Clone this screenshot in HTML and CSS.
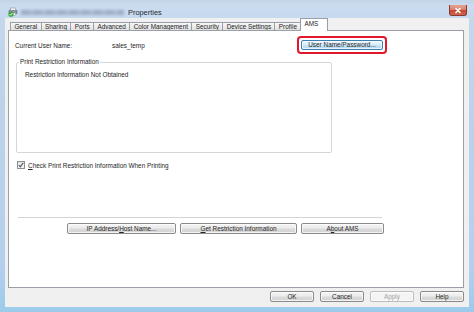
FILE: index.html
```html
<!DOCTYPE html>
<html>
<head>
<meta charset="utf-8">
<link rel="stylesheet" href="styles.css">
</head>
<body>
<div class="window">
  <div class="titlebar">
    <svg class="app-icon" width="10" height="10" viewBox="0 0 10 10">
      <rect x="1" y="3" width="8" height="4" rx="1" fill="#8d9aa6" stroke="#5b6670" stroke-width="0.6"/>
      <rect x="2.5" y="1" width="5" height="2.2" fill="#f4f6f8" stroke="#7a8590" stroke-width="0.5"/>
      <rect x="2.5" y="6" width="5" height="2.5" fill="#ffffff" stroke="#7a8590" stroke-width="0.5"/>
      <circle cx="3" cy="7.2" r="2.6" fill="#3aa83a"/>
      <path d="M1.7 7.2 L2.7 8.2 L4.4 6.1" stroke="#fff" stroke-width="0.9" fill="none"/>
    </svg>
    <div class="blurred-name"></div>
    <div class="title">Properties</div>
    <div class="close-btn">
      <svg width="8" height="7" viewBox="0 0 8 7"><path d="M1.5 1 L6.5 6 M6.5 1 L1.5 6" stroke="#fff" stroke-width="1.6"/></svg>
    </div>
  </div>
  <div class="client">
    <div class="tabs">
      <div class="tab">General</div>
      <div class="tab">Sharing</div>
      <div class="tab">Ports</div>
      <div class="tab">Advanced</div>
      <div class="tab">Color Management</div>
      <div class="tab">Security</div>
      <div class="tab">Device Settings</div>
      <div class="tab">Profile</div>
      <div class="tab tab-active">AMS</div>
    </div>
    <div class="panel">
      <div class="content">
        <div class="user-row">
          <span class="user-label">Current User Name:</span>
          <span class="user-value">sales_temp</span>
          <div class="highlight">
            <button class="btn btn-hot btn-user">User Name/Password...</button>
          </div>
        </div>
        <fieldset class="group">
          <legend>Print Restriction Information</legend>
          <div class="group-body">Restriction Information Not Obtained</div>
        </fieldset>
        <label class="check-row">
          <span class="checkbox">
            <svg width="6" height="6" viewBox="0 0 6 6"><path d="M0.8 3.2 L2.3 4.8 L5.2 0.9" stroke="#4a5a6a" stroke-width="1.1" fill="none"/></svg>
          </span>
          <span><u>C</u>heck Print Restriction Information When Printing</span>
        </label>
        <div class="separator"></div>
        <div class="action-row">
          <button class="btn btn-ip">IP Address/<u>H</u>ost Name...</button>
          <button class="btn btn-get"><u>G</u>et Restriction Information</button>
          <button class="btn btn-about">A<u>b</u>out AMS</button>
        </div>
      </div>
    </div>
    <div class="dialog-buttons">
      <button class="btn btn-dlg">OK</button>
      <button class="btn btn-dlg">Cancel</button>
      <button class="btn btn-dlg btn-disabled">Apply</button>
      <button class="btn btn-dlg">Help</button>
    </div>
  </div>
</div>
</body>
</html>
```
FILE: styles.css
```css
* { box-sizing: border-box; }
html, body { margin: 0; padding: 0; }
body {
  width: 474px;
  height: 312px;
  overflow: hidden;
  font-family: "Liberation Sans", Arial, sans-serif;
  font-size: 6.4px;
  color: #262626;
}
.window {
  width: 474px;
  height: 312px;
  display: flex;
  flex-direction: column;
  background: linear-gradient(180deg, #c6d8ec 0%, #bcd2ea 40%, #b4d0ee 85%, #9ccbea 100%);
}
.titlebar {
  height: 18px;
  flex: none;
  display: flex;
  align-items: center;
  padding-top: 6px;
  padding-left: 8px;
  padding-right: 7px;
  background: linear-gradient(180deg, #c2d4e8 0%, #cbdcef 30%, #c6d9ee 100%);
}
.app-icon { flex: none; }
.blurred-name {
  margin-left: 3px;
  width: 103px;
  height: 5px;
  background: repeating-linear-gradient(90deg, #96a6bb 0 9px, #a9b9cd 9px 12px);
  filter: blur(1.4px);
  opacity: 0.85;
}
.title {
  margin-left: 4px;
  font-size: 7.4px;
  color: #1f2a36;
}
.close-btn {
  margin-left: auto;
  align-self: flex-start;
  margin-top: -1px;
  width: 18px;
  height: 11px;
  border: 1px solid #8a3a30;
  border-top: none;
  border-radius: 0 0 3px 3px;
  background: linear-gradient(180deg, #e4a493 0%, #d9806c 45%, #c64a34 55%, #cf6a4f 100%);
  display: flex;
  align-items: center;
  justify-content: center;
}
.client {
  flex: 1;
  margin: 0 5px 5px 5px;
  background: #f0f0f0;
  display: flex;
  flex-direction: column;
  padding: 0 5px 0 3px;
}
.tabs {
  height: 12px;
  flex: none;
  display: flex;
  align-items: flex-end;
  padding-left: 3px;
}
.tab {
  height: 8px;
  line-height: 7px;
  padding: 0 3.4px;
  margin-left: -1px;
  border: 1px solid #9a9ea6;
  border-bottom: none;
  background: linear-gradient(180deg, #f7f7f7 0%, #ececec 50%, #e1e1e1 100%);
  white-space: nowrap;
}
.tab-active {
  height: 13px;
  margin-bottom: -1px;
  padding: 1px 9px 0 3px;
  line-height: 7px;
  background: #ffffff;
  position: relative;
  z-index: 1;
}
.panel {
  height: 258px;
  flex: none;
  background: #ffffff;
  border: 1px solid #9a9ea6;
  padding: 5px 0 0 6px;
}
.content {
  width: 372px;
}
.user-row {
  display: flex;
  align-items: center;
  height: 18px;
}
.user-label { width: 97px; }
.user-value { flex: 1; }
.highlight {
  border: 2px solid #e0182e;
  border-radius: 4px;
  padding: 2px;
  display: flex;
}
.btn {
  font-family: "Liberation Sans", Arial, sans-serif;
  font-size: 6.4px;
  color: #262626;
  height: 11px;
  line-height: 9px;
  padding: 0;
  margin: 0;
  border: 1px solid #8a8a8a;
  border-radius: 2px;
  background: linear-gradient(180deg, #f4f4f4 0%, #ebebeb 48%, #dcdcdc 52%, #d2d2d2 100%);
  box-shadow: inset 0 0 0 1px rgba(255,255,255,0.7);
  text-align: center;
  white-space: nowrap;
}
.btn-hot {
  border-color: #3c7fb1;
  background: linear-gradient(180deg, #eef7fd 0%, #dceffb 48%, #c5e4f7 52%, #b5d9f0 100%);
}
.btn-user { width: 82px; height: 10px; line-height: 8px; }
.group {
  margin: 4px 0 0 1px;
  padding: 0 0 0 2px;
  width: 316px;
  border: 1px solid #d3d7da;
  border-radius: 2px;
}
.group legend {
  padding: 0 1px;
  line-height: 8px;
}
.group-body {
  height: 86px;
  padding: 5px 0 0 6px;
  line-height: 8px;
}
.check-row {
  display: flex;
  align-items: center;
  height: 8px;
  margin-top: 8px;
  margin-left: 2px;
}
.checkbox {
  width: 8px;
  height: 8px;
  border: 1px solid #8f8f8f;
  background: linear-gradient(180deg, #e6e6e6 0%, #f6f6f6 100%);
  display: flex;
  align-items: center;
  justify-content: center;
  margin-right: 3px;
}
.separator {
  margin: 48px 0 0 3px;
  width: 364px;
  height: 2px;
  border-top: 1px solid #d5d5d5;
  border-bottom: 1px solid #ffffff;
}
.action-row {
  display: flex;
  gap: 4px;
  margin-top: 4px;
  padding-left: 52px;
}
.btn-ip { width: 109px; }
.btn-get { width: 117px; }
.btn-about { width: 83px; }
.dialog-buttons {
  display: flex;
  justify-content: flex-end;
  gap: 6px;
  margin-top: 3px;
  padding-right: 0;
}
.btn-dlg { width: 44px; }
.btn-disabled {
  color: #a3a3a3;
  border-color: #b9bdc0;
  background: #f4f4f4;
}
u { text-decoration-thickness: 0.5px; text-underline-offset: 1px; }
```
